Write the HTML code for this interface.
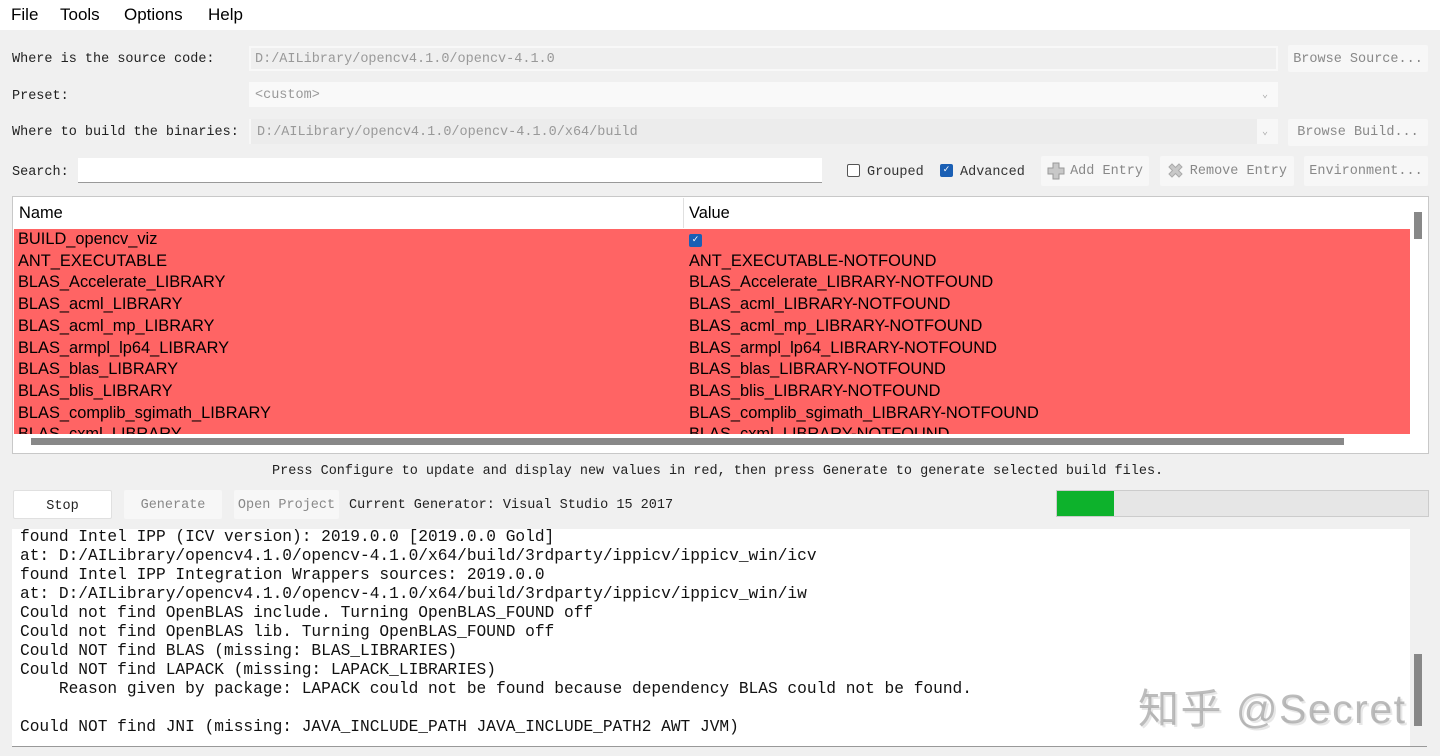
<!DOCTYPE html>
<html><head><meta charset="utf-8"><style>
*{margin:0;padding:0;box-sizing:border-box}
body{width:1440px;height:756px;background:#f0f0f0;position:relative;overflow:hidden;font-family:"Liberation Mono","Noto Serif CJK SC",monospace;font-size:13.5px;color:#222}
.a{position:absolute;white-space:nowrap}
.menu{left:0;top:0;width:1440px;height:30px;background:#fff;font-family:"Liberation Sans",sans-serif;font-size:17px;color:#000}
.menu span{position:absolute;top:5px}
.fld{position:absolute;border:2px solid #f8f8f8;background:#efefef;color:#999;padding-left:4px;line-height:23px}
.btn{position:absolute;background:#f7f7f7;color:#888;text-align:center;border-radius:2px}
.row{position:absolute;left:18px;font-family:"Liberation Sans",sans-serif;font-size:16.4px;color:#000;white-space:nowrap}
.log{position:absolute;left:20px;font-size:16.2px;color:#111;white-space:pre;font-family:"Liberation Mono",monospace}
.cb{position:absolute;width:13px;height:13px;border:1px solid #555;border-radius:2px;background:#fff}
.cbc{background:#1a5fb4;border-color:#1a5fb4;color:#fff;font-size:9px;line-height:11px;text-align:center;font-family:"DejaVu Sans",sans-serif}
</style></head><body>
<div class="a menu"><span style="left:11px">File</span><span style="left:60px">Tools</span><span style="left:124px">Options</span><span style="left:208px">Help</span></div>

<div class="a" style="left:12px;top:52px">Where is the source code:</div>
<div class="fld" style="left:249px;top:46px;width:1029px;height:25px">D:/AILibrary/opencv4.1.0/opencv-4.1.0</div>
<div class="btn" style="left:1288px;top:45px;width:140px;height:27px;line-height:29px">Browse Source...</div>

<div class="a" style="left:12px;top:89px">Preset:</div>
<div class="fld" style="left:249px;top:82px;width:1029px;height:25px;background:#f9f9f9;border-color:#f9f9f9">&lt;custom&gt;<span style="position:absolute;right:8px;color:#aaa;font-size:10px">⌄</span></div>

<div class="a" style="left:12px;top:125px">Where to build the binaries:</div>
<div class="fld" style="left:249px;top:119px;width:1029px;height:25px;background:#f7f7f7;border-color:#f7f7f7"><div style="position:absolute;left:0;top:-2px;width:1006px;height:25px;background:#ececec"></div><span style="position:relative;left:2px">D:/AILibrary/opencv4.1.0/opencv-4.1.0/x64/build</span><span style="position:absolute;right:8px;color:#aaa;font-size:10px">⌄</span></div>
<div class="btn" style="left:1288px;top:119px;width:140px;height:27px;line-height:27px">Browse Build...</div>

<div class="a" style="left:12px;top:165px;color:#222">Search:</div>
<div class="a" style="left:78px;top:158px;width:744px;height:25px;background:#fff;border-bottom:1px solid #999"></div>
<div class="cb" style="left:847px;top:164px"></div><div class="a" style="left:867px;top:165px;color:#333">Grouped</div>
<div class="cb cbc" style="left:940px;top:164px">✓</div><div class="a" style="left:960px;top:165px;color:#333">Advanced</div>
<div class="btn" style="left:1041px;top:156px;width:108px;height:30px;line-height:32px;text-align:right;padding-right:6px">Add Entry</div>
<div class="a" style="left:1047px;top:162px;width:18px;height:18px"><svg width="18" height="18"><path d="M6 1h6v5h5v6h-5v5H6v-5H1V6h5z" fill="#c8c8c8" stroke="#999"/></svg></div>
<div class="btn" style="left:1160px;top:156px;width:134px;height:30px;line-height:32px;text-align:right;padding-right:7px">Remove Entry</div>
<div class="a" style="left:1166px;top:162px"><svg width="19" height="18"><path d="M3 5l3-3 3.5 3.5L13 2l3 3-3.5 3.5L16 12l-3 3-3.5-3.5L6 15l-3-3 3.5-3.5z" fill="#c8c8c8" stroke="#aaa"/></svg></div>
<div class="btn" style="left:1304px;top:156px;width:124px;height:30px;line-height:32px">Environment...</div>

<div class="a" style="left:12px;top:196px;width:1417px;height:258px;background:#fff;border:1px solid #c8c8c8"></div>
<div class="a" style="left:683px;top:198px;width:1px;height:30px;background:#e0e0e0"></div>
<div class="row" style="left:19px;top:204px">Name</div>
<div class="row" style="left:689px;top:204px">Value</div>
<div class="a" style="left:14px;top:229px;width:1396px;height:205px;background:#ff6464;overflow:hidden">
<div class="row" style="left:4px;top:0px;line-height:21.7px">BUILD_opencv_viz<br>ANT_EXECUTABLE<br>BLAS_Accelerate_LIBRARY<br>BLAS_acml_LIBRARY<br>BLAS_acml_mp_LIBRARY<br>BLAS_armpl_lp64_LIBRARY<br>BLAS_blas_LIBRARY<br>BLAS_blis_LIBRARY<br>BLAS_complib_sgimath_LIBRARY<br>BLAS_cxml_LIBRARY</div>
<div class="row" style="left:675px;top:0px;line-height:21.7px"><br>ANT_EXECUTABLE-NOTFOUND<br>BLAS_Accelerate_LIBRARY-NOTFOUND<br>BLAS_acml_LIBRARY-NOTFOUND<br>BLAS_acml_mp_LIBRARY-NOTFOUND<br>BLAS_armpl_lp64_LIBRARY-NOTFOUND<br>BLAS_blas_LIBRARY-NOTFOUND<br>BLAS_blis_LIBRARY-NOTFOUND<br>BLAS_complib_sgimath_LIBRARY-NOTFOUND<br>BLAS_cxml_LIBRARY-NOTFOUND</div>
<div class="cb cbc" style="left:675px;top:5px">✓</div>
</div>
<div class="a" style="left:31px;top:438px;width:1313px;height:7px;background:#888"></div>
<div class="a" style="left:1414px;top:212px;width:8px;height:27px;background:#888"></div>

<div class="a" style="left:272px;top:464px;color:#222">Press Configure to update and display new values in red, then press Generate to generate selected build files.</div>

<div class="btn" style="left:13px;top:490px;width:99px;height:29px;line-height:31px;background:#fff;color:#222;border:1px solid #e0e0e0">Stop</div>
<div class="btn" style="left:124px;top:490px;width:98px;height:29px;line-height:31px">Generate</div>
<div class="btn" style="left:234px;top:490px;width:105px;height:29px;line-height:31px">Open Project</div>
<div class="a" style="left:349px;top:498px;color:#222">Current Generator: Visual Studio 15 2017</div>
<div class="a" style="left:1056px;top:490px;width:373px;height:27px;background:#e6e6e6;border:1px solid #ccc"></div>
<div class="a" style="left:1057px;top:491px;width:57px;height:25px;background:#0db22c"></div>

<div class="a" style="left:12px;top:529px;width:1398px;height:217px;background:#fff"></div>
<div class="a" style="left:12px;top:746px;width:1415px;height:1px;background:#999"></div>
<div class="a" style="left:1414px;top:654px;width:8px;height:72px;background:#888"></div>
<div class="log" style="top:528px;line-height:19px">found Intel IPP (ICV version): 2019.0.0 [2019.0.0 Gold]
at: D:/AILibrary/opencv4.1.0/opencv-4.1.0/x64/build/3rdparty/ippicv/ippicv_win/icv
found Intel IPP Integration Wrappers sources: 2019.0.0
at: D:/AILibrary/opencv4.1.0/opencv-4.1.0/x64/build/3rdparty/ippicv/ippicv_win/iw
Could not find OpenBLAS include. Turning OpenBLAS_FOUND off
Could not find OpenBLAS lib. Turning OpenBLAS_FOUND off
Could NOT find BLAS (missing: BLAS_LIBRARIES)
Could NOT find LAPACK (missing: LAPACK_LIBRARIES)
    Reason given by package: LAPACK could not be found because dependency BLAS could not be found.

Could NOT find JNI (missing: JAVA_INCLUDE_PATH JAVA_INCLUDE_PATH2 AWT JVM)</div>
<div class="a" style="left:1138px;top:675px;font-family:'Liberation Sans','Noto Sans CJK SC',sans-serif;font-size:41px;letter-spacing:1.5px;color:rgba(160,160,160,0.7);text-shadow:2px 2px 0 rgba(225,225,225,0.8)">知乎 @Secret</div>
</body></html>
